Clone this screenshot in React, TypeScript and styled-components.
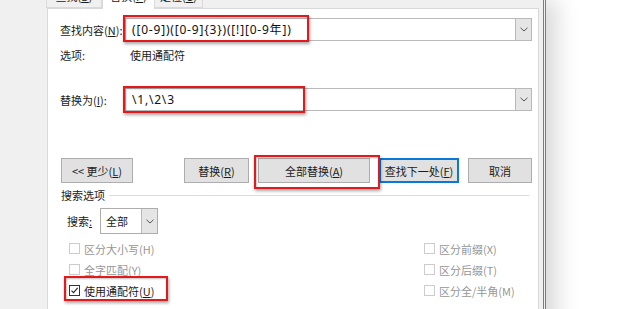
import styled, { createGlobalStyle } from "styled-components";

const GlobalStyle = createGlobalStyle`
  html, body {
    margin: 0;
    padding: 0;
    background: #ffffff;
    overflow: hidden;
  }
  body {
    font-family: "Noto Sans CJK SC", "Noto Sans", sans-serif;
    font-size: 11px;
    color: #1b1b1b;
  }
`;

function Chevron() {
  return (
    <svg width="8" height="5" viewBox="0 0 8 5">
      <path d="M0.5 0.8 L4 4 L7.5 0.8" fill="none" stroke="#555" strokeWidth="1" />
    </svg>
  );
}

function Tick() {
  return (
    <svg width="11" height="11" viewBox="0 0 11 11">
      <path d="M1.8 5.6 L4.3 8.2 L9.4 2.2" fill="none" stroke="#222" strokeWidth="1.3" />
    </svg>
  );
}

function Combo({ value }: { value: string }) {
  return (
    <ComboBox>
      <EditText>{value}</EditText>
      <ComboButton>
        <Chevron />
      </ComboButton>
    </ComboBox>
  );
}

function Check({
  label,
  mnemonic,
  checked,
  disabled,
}: {
  label: string;
  mnemonic: string;
  checked?: boolean;
  disabled?: boolean;
}) {
  return (
    <CheckRow $disabled={disabled}>
      <CheckBox $disabled={disabled}>{checked && <Tick />}</CheckBox>
      <span>
        {label}(
        {disabled ? mnemonic : <Mn>{mnemonic}</Mn>})
      </span>
    </CheckRow>
  );
}

export default function App() {
  return (
    <>
      <GlobalStyle />
      <Stage>
        <Window>
          <TabStrip>
            <Tab $width={56}>
              查找(<Mn>D</Mn>)
            </Tab>
            <Tab $width={53} $active>
              替换(<Mn>P</Mn>)
            </Tab>
            <Tab $width={49}>
              定位(<Mn>G</Mn>)
            </Tab>
          </TabStrip>
          <Panel>
            <FieldRow>
              <Label>
                查找内容(<Mn>N</Mn>):
              </Label>
              <Marked>
                <Combo value="([0-9])([0-9]{3})([!][0-9年])" />
                <RedBox $left={-2} $top={-3} $width={186} $height={27} />
              </Marked>
            </FieldRow>
            <OptionRow>
              <Label>选项:</Label>
              <span>使用通配符</span>
            </OptionRow>
            <FieldRow $gap={26}>
              <Label>
                替换为(<Mn>I</Mn>):
              </Label>
              <Marked>
                <Combo value="\1,\2\3" />
                <RedBox $left={-2} $top={-2} $width={182} $height={27} />
              </Marked>
            </FieldRow>
            <ButtonRow>
              <Button $width={72}>
                {"<< 更少("}
                <Mn>L</Mn>)
              </Button>
              <ButtonGroup>
                <Button $width={65}>
                  替换(<Mn>R</Mn>)
                </Button>
                <Marked>
                  <Button $width={112}>
                    全部替换(<Mn>A</Mn>)
                  </Button>
                  <RedBox $left={-4} $top={-3} $width={126} $height={34} />
                </Marked>
                <Button $width={80} $default>
                  查找下一处(<Mn>F</Mn>)
                </Button>
                <Button $width={64}>取消</Button>
              </ButtonGroup>
            </ButtonRow>
            <GroupHeader>
              <span>搜索选项</span>
              <Rule />
            </GroupHeader>
            <SearchRow>
              <span>
                搜索<Mn>:</Mn>
              </span>
              <SelectBox>
                <ComboText>全部</ComboText>
                <ComboButton>
                  <Chevron />
                </ComboButton>
              </SelectBox>
            </SearchRow>
            <CheckGrid>
              <Check label="区分大小写" mnemonic="H" disabled />
              <Check label="区分前缀" mnemonic="X" disabled />
              <Check label="全字匹配" mnemonic="Y" disabled />
              <Check label="区分后缀" mnemonic="T" disabled />
              <Marked>
                <Check label="使用通配符" mnemonic="U" checked />
                <RedBox $left={-5} $top={-4} $width={104} $height={25} />
              </Marked>
              <Check label="区分全/半角" mnemonic="M" disabled />
            </CheckGrid>
          </Panel>
        </Window>
      </Stage>
    </>
  );
}

const Stage = styled.div`
  width: 620px;
  height: 309px;
  overflow: hidden;
  display: flex;
`;

const Window = styled.div`
  width: 492px;
  height: 340px;
  background: #f0f0f0;
  padding: 0 4px 0 47px;
  border-right: 3px double #7d7d7d;
  box-shadow: 10px 0 22px rgba(0, 0, 0, 0.16);
  display: flex;
  flex-direction: column;
`;

const TabStrip = styled.div`
  display: flex;
  align-items: flex-end;
  height: 20px;
  margin-top: -12px;
  position: relative;
  z-index: 1;
`;

const Tab = styled.div<{ $width: number; $active?: boolean }>`
  width: ${(p) => p.$width}px;
  height: ${(p) => (p.$active ? 21 : 18)}px;
  box-sizing: border-box;
  margin-bottom: ${(p) => (p.$active ? -1 : 0)}px;
  border: 1px solid #d9d9d9;
  border-bottom: ${(p) => (p.$active ? "none" : "1px solid #d9d9d9")};
  margin-left: ${(p) => (p.$active ? 0 : -1)}px;
  background: ${(p) => (p.$active ? "#ffffff" : "#f0f0f0")};
  display: flex;
  justify-content: center;
  align-items: flex-end;
  padding-bottom: ${(p) => (p.$active ? 7 : 5)}px;
  line-height: 12px;
`;

const Panel = styled.div`
  flex: 1;
  background: #ffffff;
  border: 1px solid #d9d9d9;
  padding: 9px 6px 0 12px;
  display: flex;
  flex-direction: column;
`;

const FieldRow = styled.div<{ $gap?: number }>`
  display: grid;
  grid-template-columns: 65px 1fr;
  align-items: center;
  height: 23px;
  margin-top: ${(p) => p.$gap ?? 0}px;
`;

const Label = styled.span`
  line-height: 14px;
  white-space: nowrap;
`;

const Mn = styled.span`
  text-decoration: underline;
  text-underline-offset: 1px;
`;

const Marked = styled.div`
  position: relative;
  display: flex;
`;

const RedBox = styled.div<{
  $left: number;
  $top: number;
  $width: number;
  $height: number;
}>`
  position: absolute;
  left: ${(p) => p.$left}px;
  top: ${(p) => p.$top}px;
  width: ${(p) => p.$width}px;
  height: ${(p) => p.$height}px;
  box-sizing: border-box;
  border: 2px solid #e3191c;
  box-shadow: 1px 2px 3px rgba(0, 0, 0, 0.35),
    inset 1px 1px 2px rgba(0, 0, 0, 0.25);
  pointer-events: none;
`;

const ComboBox = styled.div`
  flex: 1;
  height: 23px;
  box-sizing: border-box;
  border: 1px solid #b9b9b9;
  background: #ffffff;
  display: flex;
  align-items: stretch;
`;

const ComboText = styled.span`
  flex: 1;
  padding-left: 5px;
  display: flex;
  align-items: center;
  line-height: 14px;
  white-space: nowrap;
`;

const EditText = styled(ComboText)`
  font-family: "Noto Sans", "Noto Sans CJK SC", sans-serif;
  font-size: 12px;
  letter-spacing: 0.8px;
  padding-left: 6px;
  color: #111;
`;

const ComboButton = styled.span`
  width: 15px;
  background: #e5e5e5;
  border-left: 1px solid #b9b9b9;
  display: flex;
  align-items: center;
  justify-content: center;
`;

const OptionRow = styled.div`
  display: grid;
  grid-template-columns: 70px 1fr;
  margin-top: 7px;
  line-height: 14px;
`;

const ButtonRow = styled.div`
  display: flex;
  justify-content: space-between;
  margin-top: 47px;
  padding-left: 1px;
`;

const ButtonGroup = styled.div`
  display: flex;
  gap: 9px;
`;

const Button = styled.button<{ $width: number; $default?: boolean }>`
  width: ${(p) => p.$width}px;
  height: 25px;
  box-sizing: border-box;
  padding: 0;
  font: inherit;
  color: #1b1b1b;
  line-height: 14px;
  background: #e1e1e1;
  border: ${(p) => (p.$default ? "2px solid #0a78d7" : "1px solid #adadad")};
  white-space: nowrap;
`;

const GroupHeader = styled.div`
  display: flex;
  align-items: center;
  gap: 4px;
  margin-top: 6px;
  height: 12px;
  padding-left: 1px;
  padding-right: 3px;
  line-height: 12px;
`;

const Rule = styled.div`
  flex: 1;
  height: 1px;
  background: #dcdcdc;
`;

const SearchRow = styled.div`
  display: flex;
  align-items: center;
  gap: 8px;
  margin-top: 7px;
  padding-left: 7px;
  line-height: 14px;
`;

const SelectBox = styled.div`
  width: 58px;
  height: 26px;
  box-sizing: border-box;
  border: 1px solid #adadad;
  background: #ffffff;
  display: flex;
  align-items: stretch;
`;

const CheckGrid = styled.div`
  display: grid;
  grid-template-columns: 355px 1fr;
  grid-auto-rows: 21px;
  margin-top: 4px;
  padding-left: 9px;
`;

const CheckRow = styled.label<{ $disabled?: boolean }>`
  display: flex;
  align-items: center;
  gap: 4px;
  height: 21px;
  line-height: 14px;
  color: ${(p) => (p.$disabled ? "#969696" : "#1b1b1b")};
  white-space: nowrap;
`;

const CheckBox = styled.span<{ $disabled?: boolean }>`
  width: 11px;
  height: 11px;
  box-sizing: border-box;
  border: 1px solid ${(p) => (p.$disabled ? "#cccccc" : "#333333")};
  background: #ffffff;
  display: flex;
  align-items: center;
  justify-content: center;
  overflow: hidden;
`;
